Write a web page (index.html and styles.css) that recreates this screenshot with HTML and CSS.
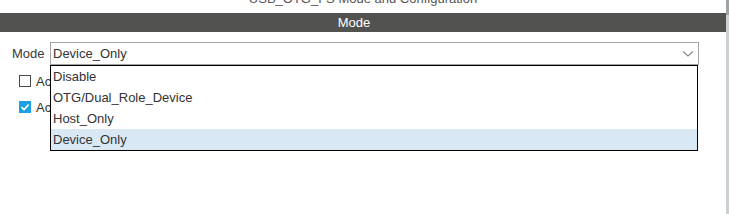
FILE: index.html
```html
<!DOCTYPE html>
<html lang="en">
<head>
    <meta charset="UTF-8">
    <title>USB_OTG_FS Mode and Configuration</title>
    <link rel="stylesheet" href="styles.css">
</head>
<body>
    <div class="page">
        <div class="main">
            <div class="title">USB_OTG_FS Mode and Configuration</div>
            <div class="bar">Mode</div>

            <div class="form">
                <div class="row">
                    <span class="label">Mode</span>
                    <div class="select">
                        <span>Device_Only</span>
                        <svg class="chevron" width="12" height="8" viewBox="0 0 12 8">
                            <path d="M1 1.5 L6 6 L11 1.5" fill="none" stroke="#8a8a8a" stroke-width="1.1"/>
                        </svg>
                    </div>
                </div>

                <div class="check-row">
                    <span class="box"></span>
                    <span class="check-text">Activate_SOF</span>
                </div>
                <div class="check-row">
                    <span class="box checked">
                        <svg width="12" height="12" viewBox="0 0 12 12">
                            <path d="M2.5 6.2 L5 8.6 L9.6 3.6" fill="none" stroke="#fff" stroke-width="1.6"/>
                        </svg>
                    </span>
                    <span class="check-text">Activate_VBUS</span>
                </div>

                <!-- open dropdown, drawn over the checkboxes -->
                <ul class="options">
                    <li>Disable</li>
                    <li>OTG/Dual_Role_Device</li>
                    <li>Host_Only</li>
                    <li class="active">Device_Only</li>
                </ul>
            </div>
        </div>
        <div class="scroll">
            <div class="thumb"></div>
        </div>
    </div>
</body>
</html>
```

FILE: styles.css
```css
body {
    margin: 0;
    background: #fff;
    font-family: "Liberation Sans", Arial, sans-serif;
    font-size: 13px;
    color: #3a3a3a;
    overflow: hidden;
}
.page {
    display: flex;
    height: 214px;
}
.main {
    flex: 1;
}
.scroll {
    width: 3px;
    background: #c9d1d1;
}
.scroll .thumb {
    height: 15px;
    background: #9ea3a3;
}
.title {
    margin-top: -9px;
    height: 16px;
    line-height: 16px;
    margin-bottom: 6px;
    text-align: center;
    color: #555;
}
.bar {
    height: 19px;
    line-height: 19px;
    background: #525350;
    color: #fff;
    text-align: center;
    padding-right: 18px;
}
.form {
    position: relative;
    padding-top: 10px;
}
.row {
    display: flex;
    align-items: center;
    padding-left: 12px;
    margin-bottom: 3px;
}
.label {
    width: 38px;
    color: #3a3a3a;
}
.select {
    width: 645px;
    height: 21px;
    border: 1px solid #a4a4a4;
    display: flex;
    align-items: center;
    justify-content: space-between;
    padding-left: 2px;
    color: #333;
}
.chevron {
    margin-right: 4px;
}
.check-row {
    display: flex;
    align-items: center;
    height: 26px;
    padding-left: 19px;
}
.box {
    width: 10px;
    height: 10px;
    border: 1px solid #4a4a4a;
    margin-right: 5px;
    display: flex;
    flex-shrink: 0;
}
.box.checked {
    width: 12px;
    height: 12px;
    border: none;
    background: #1ba1e2;
}
.check-text {
    color: #333;
}
.options {
    position: absolute;
    top: 33px;
    left: 50px;
    width: 646px;
    margin: 0;
    padding: 0;
    list-style: none;
    background: #fff;
    border: 1px solid #000;
}
.options li {
    height: 21px;
    line-height: 21px;
    padding-left: 2px;
    color: #333;
}
.options li.active {
    background: #d9e8f5;
}
```
